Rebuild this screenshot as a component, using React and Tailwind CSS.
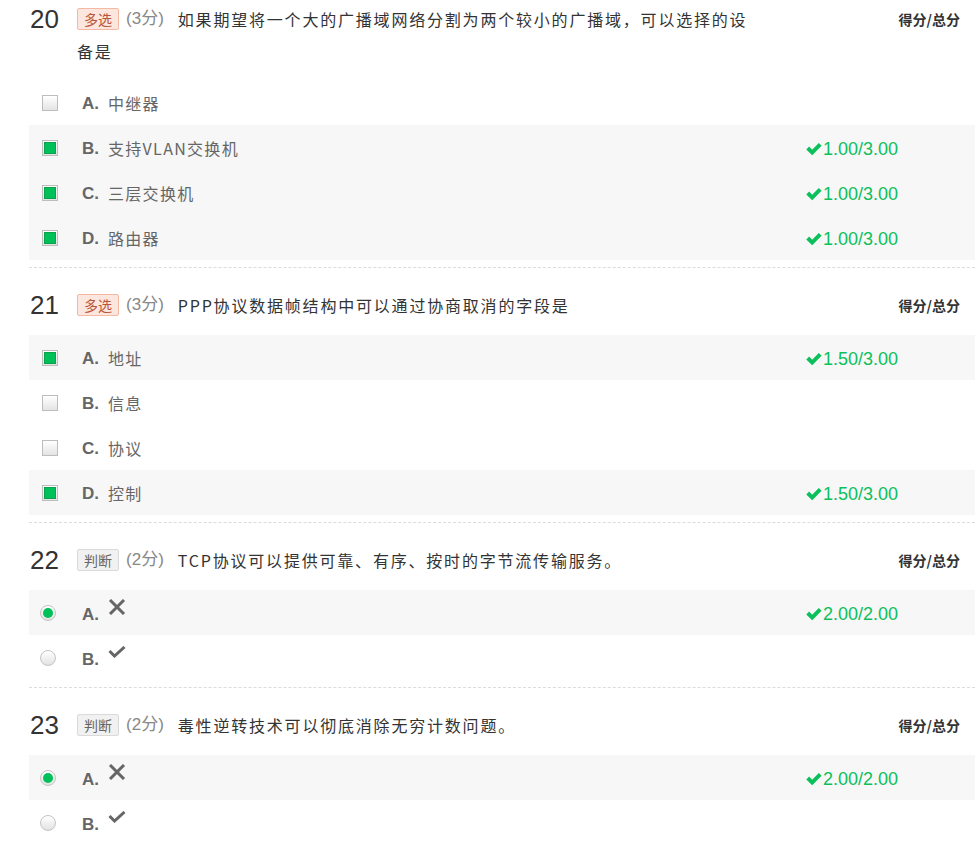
import React from "react";

const FONT = { fontFamily: '"Liberation Sans", Arial, "Noto Sans CJK SC", sans-serif' };
const CJK = { fontFamily: '"Noto Sans CJK SC", "Liberation Sans", sans-serif' };

function GreenCheck() {
  return (
    <svg width="16" height="14" viewBox="0 0 16 14" className="mr-[1px]">
      <path d="M0.3 7.4 L3.1 4.6 L6.2 7.7 L12.8 1 L15.6 3.8 L6.2 13.3 Z" fill="#0ac05b" />
    </svg>
  );
}

function Checkbox({ checked }) {
  return (
    <div className="w-[16px] h-[16px] border border-[#bdbdbd] bg-gradient-to-b from-white to-[#e4e4e4] flex items-center justify-center">
      {checked && <div className="w-[12px] h-[12px] bg-[#00c05a] border border-[#0aa04c]" />}
    </div>
  );
}

function Radio({ checked }) {
  return (
    <div className="w-[16px] h-[16px] rounded-full border border-[#c4c4c4] bg-gradient-to-b from-white to-[#e2e2e2] flex items-center justify-center">
      {checked && <div className="w-[10px] h-[10px] rounded-full bg-[#00c05a]" />}
    </div>
  );
}

function XIcon() {
  return (
    <svg width="18" height="16" viewBox="0 0 18 16" className="-translate-y-[6px]">
      <path d="M2 1 L16 15 M16 1 L2 15" stroke="#666" strokeWidth="3" />
    </svg>
  );
}

function TickIcon() {
  return (
    <svg width="18" height="12" viewBox="0 0 18 12" className="-translate-y-[6px]">
      <path d="M1.5 5 L6.5 10 L16.5 1" stroke="#666" strokeWidth="3" fill="none" />
    </svg>
  );
}

function OptionRow({ label, text, kind, checked, score, shaded, judge }) {
  return (
    <div className={`flex items-center h-[45px] ${shaded ? "bg-[#f7f7f7]" : ""}`}>
      <div className={`w-[53px] ${kind === "radio" ? "pl-[11px]" : "pl-[13px]"}`}>
        {kind === "radio" ? <Radio checked={checked} /> : <Checkbox checked={checked} />}
      </div>
      <span className={`w-[26px] text-[17px] font-bold text-[#666] ${judge ? "pt-[4px]" : "pt-[2px]"}`} style={FONT}>
        {label}
      </span>
      {judge ? (
        <span className="flex items-center">{judge === "x" ? <XIcon /> : <TickIcon />}</span>
      ) : (
        <span className="text-[16px] tracking-[1.3px] text-[#666]" style={CJK}>{text}</span>
      )}
      {score && (
        <div className="ml-auto mr-[77px] pt-[3px] flex items-center text-[18px] text-[#0ac05b]" style={FONT}>
          <GreenCheck />
          {score}
        </div>
      )}
    </div>
  );
}

function Badge({ type }) {
  const multi = type === "多选";
  return (
    <span
      className={`inline-block align-top mt-[5px] h-[22px] leading-[20px] px-[6px] rounded-[2px] border text-[14px] ${
        multi ? "bg-[#fde6dd] border-[#f5b8a2] text-[#b9553a]" : "bg-[#f1f1f1] border-[#dadada] text-[#666]"
      }`}
      style={CJK}
    >
      {type}
    </span>
  );
}

function Question({ num, type, pts, title, options, first, last }) {
  return (
    <div className={`${first ? "pt-[3px]" : "pt-[21px]"} ${last ? "" : "pb-[7px] border-b border-dashed border-[#dcdcdc]"}`}>
      <div className="flex items-start">
        <div className="w-[48px] pl-[1px] text-[26px] leading-[32px] h-[32px] text-[#333]" style={FONT}>{num}</div>
        <div className="w-[680px] text-[16px] leading-[32px] text-[#333]" style={CJK}>
          <Badge type={type} />
          <span className="ml-[7px] text-[17px] text-[#888] align-top" style={FONT}>({pts}分)</span>
          <span className="ml-[14px] tracking-[1.8px] align-top">{title}</span>
        </div>
        <div className="ml-auto mr-[15px] text-[14px] leading-[32px] font-bold text-[#333]" style={CJK}>得分/总分</div>
      </div>
      <div className={first ? "mt-[13px]" : "mt-[14px]"}>
        {options.map((o, i) => (
          <OptionRow key={i} {...o} />
        ))}
      </div>
    </div>
  );
}

export default function App() {
  return (
    <div className="bg-white w-[975px] h-[842px] overflow-hidden" style={FONT}>
      <div className="ml-[29px]">
        <Question
          first
          num="20"
          type="多选"
          pts="3"
          title="如果期望将一个大的广播域网络分割为两个较小的广播域，可以选择的设备是"
          options={[
            { label: "A.", text: "中继器" },
            { label: "B.", text: "支持VLAN交换机", checked: true, shaded: true, score: "1.00/3.00" },
            { label: "C.", text: "三层交换机", checked: true, shaded: true, score: "1.00/3.00" },
            { label: "D.", text: "路由器", checked: true, shaded: true, score: "1.00/3.00" },
          ]}
        />
        <Question
          num="21"
          type="多选"
          pts="3"
          title="PPP协议数据帧结构中可以通过协商取消的字段是"
          options={[
            { label: "A.", text: "地址", checked: true, shaded: true, score: "1.50/3.00" },
            { label: "B.", text: "信息" },
            { label: "C.", text: "协议" },
            { label: "D.", text: "控制", checked: true, shaded: true, score: "1.50/3.00" },
          ]}
        />
        <Question
          num="22"
          type="判断"
          pts="2"
          title="TCP协议可以提供可靠、有序、按时的字节流传输服务。"
          options={[
            { label: "A.", kind: "radio", judge: "x", checked: true, shaded: true, score: "2.00/2.00" },
            { label: "B.", kind: "radio", judge: "tick" },
          ]}
        />
        <Question
          last
          num="23"
          type="判断"
          pts="2"
          title="毒性逆转技术可以彻底消除无穷计数问题。"
          options={[
            { label: "A.", kind: "radio", judge: "x", checked: true, shaded: true, score: "2.00/2.00" },
            { label: "B.", kind: "radio", judge: "tick" },
          ]}
        />
      </div>
    </div>
  );
}
